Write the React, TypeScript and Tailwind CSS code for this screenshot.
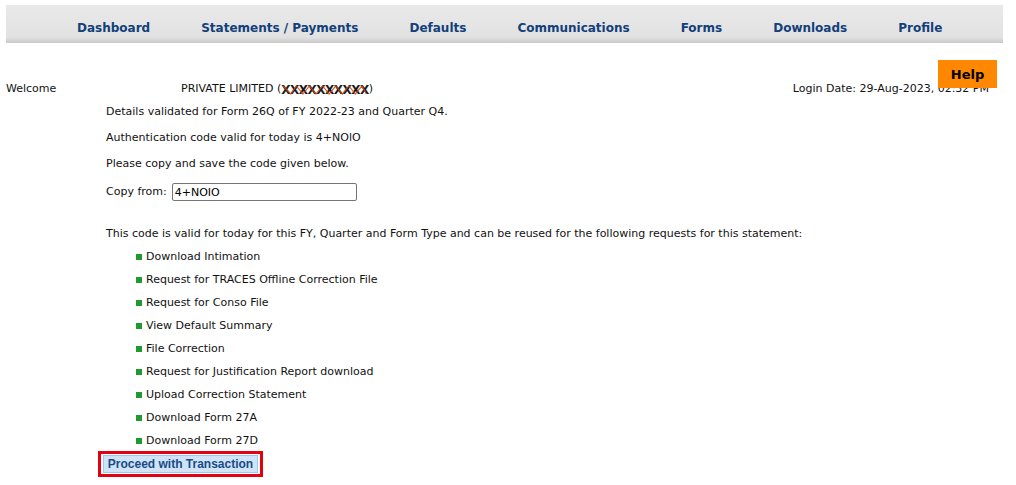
import React from 'react';

const navItems = ['Dashboard', 'Statements / Payments', 'Defaults', 'Communications', 'Forms', 'Downloads', 'Profile'];

const requests = [
  'Download Intimation',
  'Request for TRACES Offline Correction File',
  'Request for Conso File',
  'View Default Summary',
  'File Correction',
  'Request for Justification Report download',
  'Upload Correction Statement',
  'Download Form 27A',
  'Download Form 27D',
];

export default function App() {
  return (
    <div className="relative min-h-[485px] w-[1016px] bg-white pt-[5px] text-[11px] text-[#111] [font-family:'DejaVu_Sans',Verdana,sans-serif]">
      {/* menu */}
      <div className="mx-[6px] flex h-[38px] w-[997px] items-center gap-[51px] bg-gradient-to-b from-[#e9e9e9] via-[#e2e2e2] via-85% to-[#c9c9c9] pl-[71px] pt-[8px] text-[12px] font-bold text-[#12407a]">
        {navItems.map((item) => (
          <span key={item}>{item}</span>
        ))}
      </div>

      <button className="absolute right-[19px] top-[60px] h-[28px] w-[59px] bg-[#ff8800] pt-[2px] text-[13px] font-bold text-black">
        Help
      </button>

      <div className="mt-[37px] flex h-[19px] items-center pl-[6px] pr-[27px]">
        <span className="w-[175px]">Welcome</span>
        <span className="flex items-center">
          PRIVATE LIMITED (
          <span className="relative inline-block text-[12px] font-bold leading-none tracking-[-0.5px] text-[#1a1a1a]">
            XXXXXXXXXX
            <svg className="absolute left-0 top-0 h-full w-full" viewBox="0 0 80 12" preserveAspectRatio="none">
              <path
                d="M2 2 L9 10 L14 2 L20 10 L26 2 L32 10 L38 2 L44 10 L50 2 L56 10 L62 2 L68 10 L74 2 L78 10"
                fill="none"
                stroke="#d2450f"
                strokeWidth="1.2"
                opacity="0.85"
              />
            </svg>
          </span>
          )
        </span>
        <span className="ml-auto">Login Date: 29-Aug-2023, 02:32 PM</span>
      </div>

      <div className="pl-[106px]">
        <div className="flex h-[26px] items-center">Details validated for Form 26Q of FY 2022-23 and Quarter Q4.</div>
        <div className="flex h-[26px] items-center">Authentication code valid for today is 4+NOlO</div>
        <div className="flex h-[26px] items-center">Please copy and save the code given below.</div>
        <div className="flex h-[30px] items-center gap-[5px]">
          <span>Copy from:</span>
          <input
            readOnly
            value="4+NOIO"
            className="h-[18px] w-[185px] rounded-[2px] border border-[#767676] px-[2px] text-[11px] text-black outline-none"
          />
        </div>
        <div className="mt-[15px] flex h-[24px] items-center">
          This code is valid for today for this FY, Quarter and Form Type and can be reused for the following requests for this statement:
        </div>
        <ul className="pl-[30px]">
          {requests.map((r) => (
            <li key={r} className="flex h-[23px] items-center gap-[4px]">
              <span className="relative -top-[1px] h-[6px] w-[6px] bg-[#1e9a2e]" />
              {r}
            </li>
          ))}
        </ul>
      </div>

      <div className="-mt-[2px] ml-[98px] inline-flex h-[26px] w-[165px] items-center justify-center border-[3px] border-[#e3000f]">
        <button className="h-[18px] w-[155px] border border-[#a6c6e6] bg-[#cfe4f7] text-[12px] font-bold leading-none text-[#1b4a86] [font-family:'Liberation_Sans',Arial,sans-serif]">
          Proceed with Transaction
        </button>
      </div>
    </div>
  );
}
